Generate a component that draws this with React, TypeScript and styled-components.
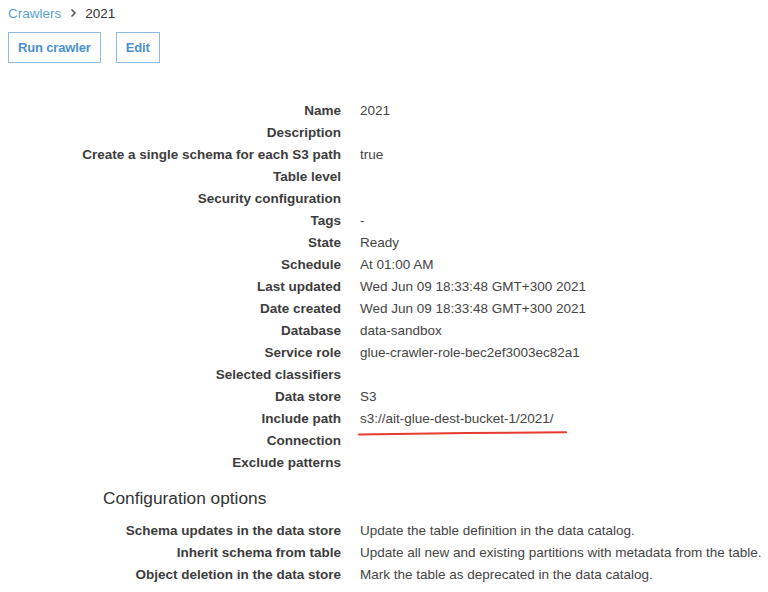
import React from "react";
import styled, { createGlobalStyle } from "styled-components";

const Global = createGlobalStyle`
  html, body { margin: 0; padding: 0; background: #ffffff; }
  body { font-family: "Liberation Sans", Arial, Helvetica, sans-serif; font-size: 13.5px; color: #444; }
`;

const Page = styled.div`
  padding: 0 8px;
  width: 768px;
  box-sizing: border-box;
`;

const Breadcrumb = styled.div`
  display: flex;
  align-items: center;
  height: 26px;
  font-size: 13.5px;
`;

const Crumb = styled.a`
  color: #5a9fd6;
  text-decoration: none;
`;

const Sep = styled.span`
  display: inline-flex;
  margin: 0 8px 0 9px;
  color: #555;
`;

const Current = styled.span`
  color: #333;
`;

const Actions = styled.div`
  display: flex;
  gap: 15px;
  margin-top: 6px;
`;

const Button = styled.button`
  height: 31px;
  padding: 0 9px;
  border: 1px solid #8dbbe4;
  background: #fff;
  color: #4a8fd0;
  font-family: "Liberation Sans", Arial, sans-serif;
  font-size: 13px;
  font-weight: 700;
  letter-spacing: -0.15px;
  cursor: pointer;
`;

const Grid = styled.dl<{ $top: number }>`
  display: grid;
  grid-template-columns: 333px 1fr;
  column-gap: 19px;
  margin: ${(p) => p.$top}px 0 0 0;
`;

const Label = styled.dt`
  text-align: right;
  font-weight: 700;
  color: #3c3c3c;
  line-height: 22px;
  height: 22px;
  white-space: nowrap;
`;

const Value = styled.dd`
  margin: 0;
  line-height: 22px;
  height: 22px;
  color: #444;
  white-space: nowrap;
  position: relative;
`;

const Heading = styled.h3`
  margin: 12px 0 10px 95px;
  font-size: 17.3px;
  font-weight: 400;
  line-height: 24px;
  color: #333;
`;

const Underline = styled.svg`
  position: absolute;
  left: -3px;
  top: 21px;
  width: 212px;
  height: 8px;
  overflow: visible;
`;

const details: [string, string, boolean?][] = [
  ["Name", "2021"],
  ["Description", ""],
  ["Create a single schema for each S3 path", "true"],
  ["Table level", ""],
  ["Security configuration", ""],
  ["Tags", "-"],
  ["State", "Ready"],
  ["Schedule", "At 01:00 AM"],
  ["Last updated", "Wed Jun 09 18:33:48 GMT+300 2021"],
  ["Date created", "Wed Jun 09 18:33:48 GMT+300 2021"],
  ["Database", "data-sandbox"],
  ["Service role", "glue-crawler-role-bec2ef3003ec82a1"],
  ["Selected classifiers", ""],
  ["Data store", "S3"],
  ["Include path", "s3://ait-glue-dest-bucket-1/2021/", true],
  ["Connection", ""],
  ["Exclude patterns", ""],
];

const config: [string, string][] = [
  ["Schema updates in the data store", "Update the table definition in the data catalog."],
  ["Inherit schema from table", "Update all new and existing partitions with metadata from the table."],
  ["Object deletion in the data store", "Mark the table as deprecated in the data catalog."],
];

export default function App() {
  return (
    <Page>
      <Global />
      <Breadcrumb>
        <Crumb href="#">Crawlers</Crumb>
        <Sep>
          <svg width="7" height="10" viewBox="0 0 7 10">
            <path d="M1.5 1.5 L5 5 L1.5 8.5" fill="none" stroke="#555" strokeWidth="1.6" />
          </svg>
        </Sep>
        <Current>2021</Current>
      </Breadcrumb>
      <Actions>
        <Button>Run crawler</Button>
        <Button>Edit</Button>
      </Actions>
      <Grid $top={37}>
        {details.map(([k, v, mark]) => (
          <React.Fragment key={k}>
            <Label>{k}</Label>
            <Value>
              {v}
              {mark && (
                <Underline viewBox="0 0 212 8">
                  <path
                    d="M2 5.5 Q 60 4.6 110 4 T 209 3.2"
                    fill="none"
                    stroke="#e63b2e"
                    strokeWidth="2"
                    strokeLinecap="round"
                  />
                </Underline>
              )}
            </Value>
          </React.Fragment>
        ))}
      </Grid>
      <Heading>Configuration options</Heading>
      <Grid $top={0}>
        {config.map(([k, v]) => (
          <React.Fragment key={k}>
            <Label>{k}</Label>
            <Value>{v}</Value>
          </React.Fragment>
        ))}
      </Grid>
    </Page>
  );
}
